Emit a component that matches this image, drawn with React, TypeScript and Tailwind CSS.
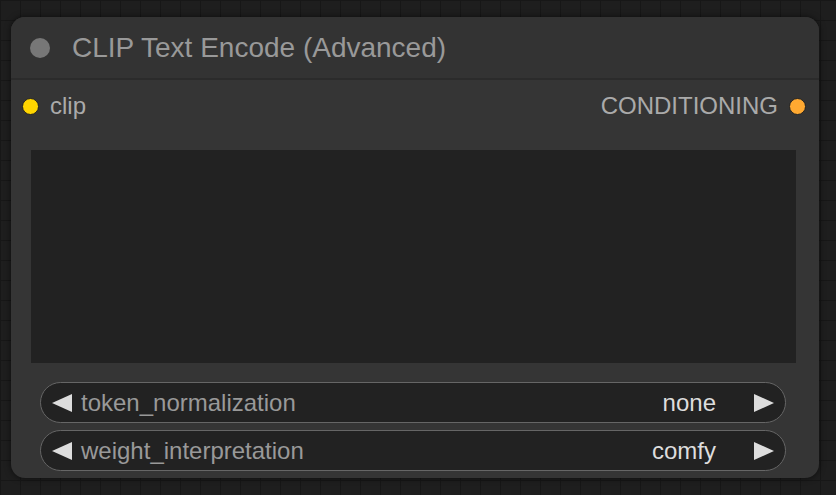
import React from "react";

function Widget({ label, value }: { label: string; value: string }) {
  return (
    <div className="flex h-[41px] items-center rounded-full border-[1.5px] border-[#666] bg-[#222] pl-[11px] pr-[11px]">
      <svg width="20" height="18" viewBox="0 0 20 18" className="shrink-0">
        <polygon points="20,0 20,18 0,9" fill="#ddd" />
      </svg>
      <span className="ml-[9px] text-[24px] leading-none text-[#999]">{label}</span>
      <span className="ml-auto text-[24px] leading-none text-[#ddd]">{value}</span>
      <svg width="20" height="18" viewBox="0 0 20 18" className="ml-[38px] shrink-0">
        <polygon points="0,0 0,18 20,9" fill="#ddd" />
      </svg>
    </div>
  );
}

export default function App() {
  return (
    <div
      className="h-[495px] w-[836px] overflow-hidden bg-[#1e1e1e] bg-[linear-gradient(to_right,#171717_1px,transparent_1px),linear-gradient(to_bottom,#171717_1px,transparent_1px)] bg-size-[20px_20px] pt-[17px] pl-[11px]"
      style={{ fontFamily: '"Liberation Sans", Arial, sans-serif' }}
    >
      <div className="flex h-[461px] w-[808px] flex-col overflow-hidden rounded-[14px] bg-[#353535] shadow-[0_0_6px_rgba(0,0,0,0.6)]">
        <div className="flex h-[63px] shrink-0 items-center border-b-2 border-[#2b2b2b] bg-[#333] pl-[19px]">
          <div className="h-[20px] w-[20px] rounded-full bg-[#777]" />
          <span className="ml-[22px] text-[28px] leading-none text-[#999]">CLIP Text Encode (Advanced)</span>
        </div>
        <div className="flex h-[52px] shrink-0 items-center pl-[11px] pr-[13px]">
          <div className="h-[17px] w-[17px] rounded-full border border-[#222] bg-[#ffd500]" />
          <span className="ml-[11px] text-[24px] leading-none text-[#aaa]">clip</span>
          <span className="ml-auto text-[24px] leading-none text-[#aaa]">CONDITIONING</span>
          <div className="ml-[11px] h-[17px] w-[17px] rounded-full border-[1.5px] border-[#222] bg-[#ffa931]" />
        </div>
        <div className="ml-[20px] mr-[23px] mt-[18px] h-[213px] shrink-0 bg-[#222]" />
        <div className="mt-[19px] flex flex-col gap-[7px] pl-[29px] pr-[33px]">
          <Widget label="token_normalization" value="none" />
          <Widget label="weight_interpretation" value="comfy" />
        </div>
      </div>
    </div>
  );
}
